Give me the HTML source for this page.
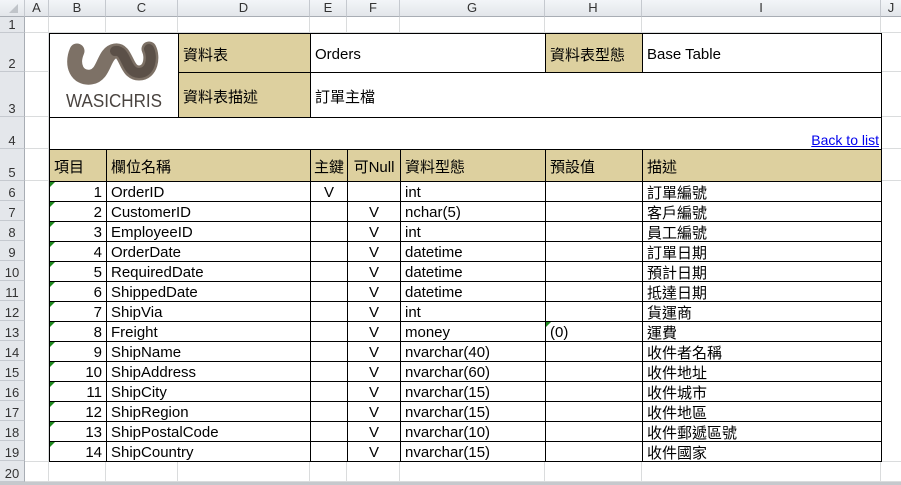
<!DOCTYPE html>
<html><head><meta charset="utf-8"><style>
*{margin:0;padding:0;box-sizing:border-box}
body{width:901px;height:485px;background:#fff;position:relative;overflow:hidden;font-family:"Liberation Sans","Noto Sans CJK TC",sans-serif;font-size:15px;color:#000}
.vl{position:absolute;top:16px;height:466px;width:1px;background:#dadcdd}
.hl{position:absolute;left:25px;width:876px;height:1px;background:#dadcdd}
.ch{position:absolute;top:0;height:17px;background:linear-gradient(#f3f5f8,#e3e6ea);border-right:1px solid #c5c9cf;border-bottom:1px solid #a8adb4;font-size:13px;color:#333;text-align:center;line-height:16px}
.rh{position:absolute;left:0;width:25px;background:#e4e7eb;border-bottom:1px solid #c5c9cf;border-right:1px solid #a8adb4;font-size:13px;color:#333;display:flex;align-items:flex-end;justify-content:center;padding-bottom:0}
.c{position:absolute;border:1px solid #000;display:flex;align-items:center;padding:2px 4px 0;white-space:nowrap;background:#fff}
.fl{background:#ddd09f}
.r{position:absolute;left:0;width:901px;height:21px}
.r .c{top:0;height:21px}
.b{left:49px;width:58px;justify-content:flex-end}
.cd{left:106px;width:205px}
.e{left:310px;width:38px;justify-content:center}
.f{left:347px;width:54px;justify-content:center}
.g{left:400px;width:146px}
.h{left:545px;width:98px}
.i{left:642px;width:240px}
.tri{position:absolute;left:0;top:0;width:0;height:0;border-top:5px solid #1e8a1e;border-right:5px solid transparent}
</style></head><body>
<div class="vl" style="left:48px"></div><div class="vl" style="left:105px"></div><div class="vl" style="left:177px"></div><div class="vl" style="left:309px"></div><div class="vl" style="left:346px"></div><div class="vl" style="left:399px"></div><div class="vl" style="left:544px"></div><div class="vl" style="left:641px"></div><div class="vl" style="left:880px"></div>
<div class="hl" style="top:32px"></div><div class="hl" style="top:71px"></div><div class="hl" style="top:116px"></div><div class="hl" style="top:148px"></div><div class="hl" style="top:180px"></div><div class="hl" style="top:461px"></div><div class="hl" style="top:481px"></div>
<div style="position:absolute;left:0;top:482px;width:901px;height:3px;background:#c6c9cd"></div>
<div class="ch" style="left:0;width:25px"><svg width="25" height="16"><path d="M18 4 L18 13 L9 13 Z" fill="#c0c4c9"/></svg></div>
<div class="ch" style="left:25px;width:24px">A</div>
<div class="ch" style="left:49px;width:57px">B</div>
<div class="ch" style="left:106px;width:72px">C</div>
<div class="ch" style="left:178px;width:132px">D</div>
<div class="ch" style="left:310px;width:37px">E</div>
<div class="ch" style="left:347px;width:53px">F</div>
<div class="ch" style="left:400px;width:145px">G</div>
<div class="ch" style="left:545px;width:97px">H</div>
<div class="ch" style="left:642px;width:239px">I</div>
<div class="ch" style="left:881px;width:20px;border-right:none">J</div>
<div class="rh" style="top:17px;height:16px">1</div>
<div class="rh" style="top:33px;height:39px">2</div>
<div class="rh" style="top:72px;height:45px">3</div>
<div class="rh" style="top:117px;height:32px">4</div>
<div class="rh" style="top:149px;height:32px">5</div>
<div class="rh" style="top:181px;height:20px">6</div>
<div class="rh" style="top:201px;height:20px">7</div>
<div class="rh" style="top:221px;height:20px">8</div>
<div class="rh" style="top:241px;height:20px">9</div>
<div class="rh" style="top:261px;height:20px">10</div>
<div class="rh" style="top:281px;height:20px">11</div>
<div class="rh" style="top:301px;height:20px">12</div>
<div class="rh" style="top:321px;height:20px">13</div>
<div class="rh" style="top:341px;height:20px">14</div>
<div class="rh" style="top:361px;height:20px">15</div>
<div class="rh" style="top:381px;height:20px">16</div>
<div class="rh" style="top:401px;height:20px">17</div>
<div class="rh" style="top:421px;height:20px">18</div>
<div class="rh" style="top:441px;height:20px">19</div>
<div class="rh" style="top:461px;height:21px">20</div>
<div class="c" style="left:49px;top:33px;width:130px;height:85px;padding:0"></div>
<svg style="position:absolute;left:49px;top:33px" width="130" height="85" viewBox="0 0 130 85">
<path d="M28 18 C22 32 28 46 42 44 C56 42 54 20 66 18 C78 16 76 40 90 40 C102 40 104 24 100 16" fill="none" stroke="#7d7166" stroke-width="15" stroke-linecap="round"/>
<path d="M66 18 C78 16 76 40 90 40 C102 40 104 24 100 16" fill="none" stroke="#5b5048" stroke-width="10" stroke-linecap="round"/>
<text x="17" y="74" textLength="96" lengthAdjust="spacingAndGlyphs" font-family="Liberation Sans,sans-serif" font-size="18" fill="#4a4440">WASICHRIS</text>
</svg>
<div class="c fl" style="left:178px;top:33px;width:133px;height:40px">資料表</div>
<div class="c" style="left:310px;top:33px;width:236px;height:40px">Orders</div>
<div class="c fl" style="left:545px;top:33px;width:98px;height:40px">資料表型態</div>
<div class="c" style="left:642px;top:33px;width:240px;height:40px">Base Table</div>
<div class="c fl" style="left:178px;top:72px;width:133px;height:46px">資料表描述</div>
<div class="c" style="left:310px;top:72px;width:572px;height:46px">訂單主檔</div>
<div class="c" style="left:49px;top:117px;width:833px;height:33px;justify-content:flex-end;align-items:flex-end;padding:0 2px 1px 0"><span style="color:#0000ee;text-decoration:underline;font-size:14px">Back to list</span></div>
<div class="r" style="top:149px;height:33px">
<div class="c fl b" style="height:33px;justify-content:flex-start">項目</div>
<div class="c fl cd" style="height:33px">欄位名稱</div>
<div class="c fl e" style="height:33px;padding:2px 0 0">主鍵</div>
<div class="c fl f" style="height:33px;padding:2px 0 0">可Null</div>
<div class="c fl g" style="height:33px">資料型態</div>
<div class="c fl h" style="height:33px">預設值</div>
<div class="c fl i" style="height:33px">描述</div>
</div>
<div class="r" style="top:181px"><div class="c b"><i class="tri"></i>1</div><div class="c cd">OrderID</div><div class="c e">V</div><div class="c f"></div><div class="c g">int</div><div class="c h"></div><div class="c i">訂單編號</div></div>
<div class="r" style="top:201px"><div class="c b"><i class="tri"></i>2</div><div class="c cd">CustomerID</div><div class="c e"></div><div class="c f">V</div><div class="c g">nchar(5)</div><div class="c h"></div><div class="c i">客戶編號</div></div>
<div class="r" style="top:221px"><div class="c b"><i class="tri"></i>3</div><div class="c cd">EmployeeID</div><div class="c e"></div><div class="c f">V</div><div class="c g">int</div><div class="c h"></div><div class="c i">員工編號</div></div>
<div class="r" style="top:241px"><div class="c b"><i class="tri"></i>4</div><div class="c cd">OrderDate</div><div class="c e"></div><div class="c f">V</div><div class="c g">datetime</div><div class="c h"></div><div class="c i">訂單日期</div></div>
<div class="r" style="top:261px"><div class="c b"><i class="tri"></i>5</div><div class="c cd">RequiredDate</div><div class="c e"></div><div class="c f">V</div><div class="c g">datetime</div><div class="c h"></div><div class="c i">預計日期</div></div>
<div class="r" style="top:281px"><div class="c b"><i class="tri"></i>6</div><div class="c cd">ShippedDate</div><div class="c e"></div><div class="c f">V</div><div class="c g">datetime</div><div class="c h"></div><div class="c i">抵達日期</div></div>
<div class="r" style="top:301px"><div class="c b"><i class="tri"></i>7</div><div class="c cd">ShipVia</div><div class="c e"></div><div class="c f">V</div><div class="c g">int</div><div class="c h"></div><div class="c i">貨運商</div></div>
<div class="r" style="top:321px"><div class="c b"><i class="tri"></i>8</div><div class="c cd">Freight</div><div class="c e"></div><div class="c f">V</div><div class="c g">money</div><div class="c h"><i class="tri"></i>(0)</div><div class="c i">運費</div></div>
<div class="r" style="top:341px"><div class="c b"><i class="tri"></i>9</div><div class="c cd">ShipName</div><div class="c e"></div><div class="c f">V</div><div class="c g">nvarchar(40)</div><div class="c h"></div><div class="c i">收件者名稱</div></div>
<div class="r" style="top:361px"><div class="c b"><i class="tri"></i>10</div><div class="c cd">ShipAddress</div><div class="c e"></div><div class="c f">V</div><div class="c g">nvarchar(60)</div><div class="c h"></div><div class="c i">收件地址</div></div>
<div class="r" style="top:381px"><div class="c b"><i class="tri"></i>11</div><div class="c cd">ShipCity</div><div class="c e"></div><div class="c f">V</div><div class="c g">nvarchar(15)</div><div class="c h"></div><div class="c i">收件城市</div></div>
<div class="r" style="top:401px"><div class="c b"><i class="tri"></i>12</div><div class="c cd">ShipRegion</div><div class="c e"></div><div class="c f">V</div><div class="c g">nvarchar(15)</div><div class="c h"></div><div class="c i">收件地區</div></div>
<div class="r" style="top:421px"><div class="c b"><i class="tri"></i>13</div><div class="c cd">ShipPostalCode</div><div class="c e"></div><div class="c f">V</div><div class="c g">nvarchar(10)</div><div class="c h"></div><div class="c i">收件郵遞區號</div></div>
<div class="r" style="top:441px"><div class="c b"><i class="tri"></i>14</div><div class="c cd">ShipCountry</div><div class="c e"></div><div class="c f">V</div><div class="c g">nvarchar(15)</div><div class="c h"></div><div class="c i">收件國家</div></div>
</body></html>
